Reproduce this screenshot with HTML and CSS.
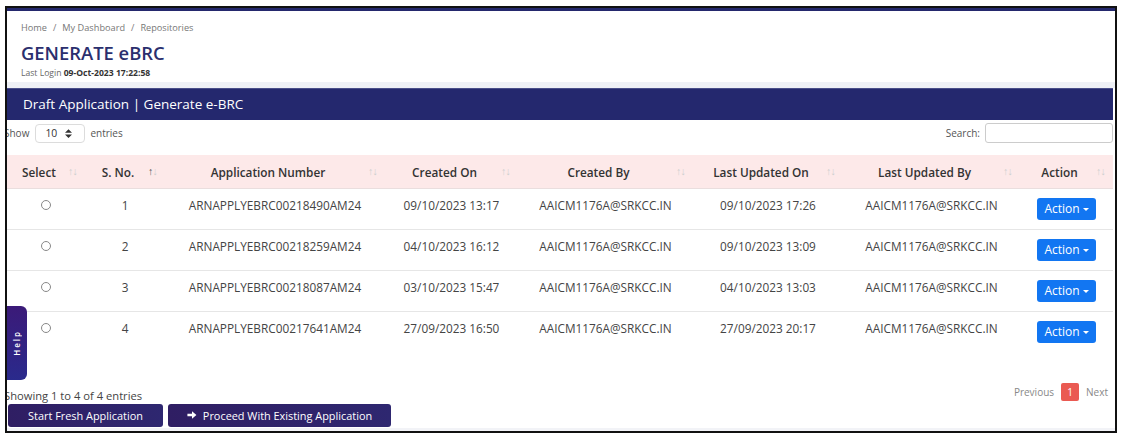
FILE: index.html
```html
<!DOCTYPE html>
<html>
<head>
<meta charset="utf-8">
<link rel="stylesheet" href="styles.css">
</head>
<body>
<div class="frame">
  <div class="topline"></div>
  <div class="header">
    <div class="crumbs">Home<span class="sep">/</span>My Dashboard<span class="sep">/</span>Repositories</div>
    <h1 class="title">GENERATE eBRC</h1>
    <div class="login">Last Login <b>09-Oct-2023 17:22:58</b></div>
  </div>
  <div class="gap"></div>
  <div class="bar">Draft Application | Generate e-BRC</div>
  <div class="controls">
    <div class="len">Show <span class="sel"><span>10</span><svg class="updown" viewBox="0 0 8 10" width="7" height="9"><path d="M4 0 L8 4 L0 4 Z M0 6 L8 6 L4 10 Z" fill="#333"/></svg></span> entries</div>
    <div class="search">Search: <span class="sinput"></span></div>
  </div>
  <table class="grid">
    <colgroup>
      <col style="width:78px"><col style="width:80px"><col style="width:220px"><col style="width:133px"><col style="width:175px"><col style="width:150px"><col style="width:177px"><col style="width:93px">
    </colgroup>
    <thead>
      <tr>
        <th>Select<span class="sort"><i>↑</i><i>↓</i></span></th>
        <th>S. No.<span class="sort up"><i>↑</i><i>↓</i></span></th>
        <th>Application Number<span class="sort"><i>↑</i><i>↓</i></span></th>
        <th>Created On<span class="sort"><i>↑</i><i>↓</i></span></th>
        <th>Created By<span class="sort"><i>↑</i><i>↓</i></span></th>
        <th>Last Updated On<span class="sort"><i>↑</i><i>↓</i></span></th>
        <th>Last Updated By<span class="sort"><i>↑</i><i>↓</i></span></th>
        <th>Action<span class="sort"><i>↑</i><i>↓</i></span></th>
      </tr>
    </thead>
    <tbody>
      <tr>
        <td><span class="radio"></span></td><td>1</td><td>ARNAPPLYEBRC00218490AM24</td><td>09/10/2023 13:17</td><td>AAICM1176A@SRKCC.IN</td><td>09/10/2023 17:26</td><td>AAICM1176A@SRKCC.IN</td><td><span class="act">Action <span class="caret"></span></span></td>
      </tr>
      <tr>
        <td><span class="radio"></span></td><td>2</td><td>ARNAPPLYEBRC00218259AM24</td><td>04/10/2023 16:12</td><td>AAICM1176A@SRKCC.IN</td><td>09/10/2023 13:09</td><td>AAICM1176A@SRKCC.IN</td><td><span class="act">Action <span class="caret"></span></span></td>
      </tr>
      <tr>
        <td><span class="radio"></span></td><td>3</td><td>ARNAPPLYEBRC00218087AM24</td><td>03/10/2023 15:47</td><td>AAICM1176A@SRKCC.IN</td><td>04/10/2023 13:03</td><td>AAICM1176A@SRKCC.IN</td><td><span class="act">Action <span class="caret"></span></span></td>
      </tr>
      <tr>
        <td><span class="radio"></span></td><td>4</td><td>ARNAPPLYEBRC00217641AM24</td><td>27/09/2023 16:50</td><td>AAICM1176A@SRKCC.IN</td><td>27/09/2023 20:17</td><td>AAICM1176A@SRKCC.IN</td><td><span class="act">Action <span class="caret"></span></span></td>
      </tr>
    </tbody>
  </table>
  <div class="foot">
    <div class="info">Showing 1 to 4 of 4 entries</div>
    <div class="pager"><span class="pl">Previous</span><span class="pnum">1</span><span class="pl">Next</span></div>
  </div>
  <div class="btns">
    <span class="btn b1">Start Fresh Application</span>
    <span class="btn b2"><svg viewBox="0 0 12 12" width="10" height="10"><path d="M0.5 4.6 H6 V1.6 L11.3 6 L6 10.4 V7.4 H0.5 Z" fill="#fff"/></svg>Proceed With Existing Application</span>
  </div>
  <div class="bottomband"></div>
  <div class="tab"><span>Help</span></div>
</div>
</body>
</html>
```
FILE: styles.css
```css
html, body { margin: 0; padding: 0; background: #fff; }
body { font-family: "Open Sans", "Liberation Sans", sans-serif; color: #444; }
.frame {
  position: relative;
  margin: 6px 0 0 5px;
  width: 1112px;
  height: 427px;
  box-sizing: border-box;
  border: 2px solid #111;
  overflow: hidden;
  display: flex;
  flex-direction: column;
  background: #fff;
}
.topline { height: 3px; background: #24286d; flex: none; }
.header { padding: 11px 0 3px 14px; flex: none; }
.crumbs { font-size: 9.2px; line-height: 12px; color: #777; }
.sep { padding: 0 6px; }
.title { margin: 7px 0 0; font-size: 18.4px; line-height: 24px; font-weight: 600; color: #2b2f6e; }
.login { margin-top: 2px; font-size: 8.6px; line-height: 12px; color: #666; }
.login b { color: #333; font-weight: 700; }
.gap { height: 6px; background: #eff1f6; flex: none; }
.bar {
  flex: none; height: 32px; margin-right: 2px; box-sizing: border-box;
  background: #24286e; color: #fff; font-size: 13.5px; line-height: 31px;
  padding-left: 16px; border-top: 1px solid #4a4f8a;
}
.controls {
  flex: none; margin: 3px 2px 0 -3px; height: 20px;
  display: flex; justify-content: space-between; align-items: center;
  font-size: 10px; color: #555;
}
.len { display: flex; align-items: center; }
.sel {
  display: inline-flex; align-items: center; justify-content: space-between;
  width: 50px; height: 19px; box-sizing: border-box; margin: 0 5px 0 6px;
  border: 1px solid #dcdcdc; border-radius: 4px; padding: 0 12px 0 9px;
  font-size: 10.4px; color: #333;
}
.search { display: flex; align-items: center; }
.sinput {
  display: inline-block; width: 128px; height: 20px; box-sizing: border-box;
  margin-left: 5px; border: 1px solid #ccc; border-radius: 3px; background: #fff;
}
.grid {
  flex: none; margin-top: 12px; width: 1106px; border-collapse: collapse; table-layout: fixed;
  font-size: 11.8px;
}
.grid th {
  position: relative; height: 33px; padding: 0 14px 0 0; background: #fde9e9;
  font-weight: 600; color: #333; text-align: center; white-space: nowrap;
  border-bottom: 1px solid #eadede;
}
.sort { position: absolute; right: 8px; top: 10px; font-size: 10.5px; line-height: 12px; color: #cfcfcf; }
.sort i { font-style: normal; display: inline-block; width: 4.5px; }
.sort.up i:first-child { color: #555; }
.grid td {
  height: 41px; box-sizing: border-box; padding: 8px 0 0; vertical-align: top;
  text-align: center; line-height: 16px; color: #444; white-space: nowrap;
}
.grid tbody tr + tr td { border-top: 1px solid #e6e6e6; }
.radio {
  display: inline-block; width: 10px; height: 10px; margin-top: 3px; box-sizing: border-box;
  border: 1px solid #888; border-radius: 50%;
}
.act {
  display: inline-flex; align-items: center; justify-content: center; gap: 3px;
  width: 59px; height: 22px; margin-top: 1px; box-sizing: border-box;
  background: #1276f2; color: #fff; border-radius: 3px; font-size: 12px;
}
.caret { width: 0; height: 0; border-left: 3px solid transparent; border-right: 3px solid transparent; border-top: 3px solid #fff; }
.foot {
  flex: none; margin: 30px 0 0 -3px; height: 20px; padding-right: 7px;
  display: flex; justify-content: space-between;
}
.info { align-self: flex-end; font-size: 11.2px; line-height: 14px; color: #444; }
.pager { display: flex; align-items: center; height: 18px; gap: 6px; font-size: 10px; color: #888; }
.pnum {
  display: inline-flex; align-items: center; justify-content: center;
  width: 18px; height: 18px; background: #ea5a52; color: #fff; border-radius: 2px; margin: 0 1px;
}
.btns { flex: none; display: flex; gap: 5px; margin: 1px 0 0 1px; }
.btn {
  display: inline-flex; align-items: center; justify-content: center; gap: 6px;
  height: 23px; border-radius: 3px; color: #fff; font-size: 10.9px;
  background: linear-gradient(90deg, #2f1e63, #2e2770);
}
.b1 { width: 155px; }
.b2 { width: 223px; }
.bottomband { flex: 1; margin-top: 1px; background: #f2f3f7; }
.tab {
  position: absolute; left: 0; top: 298px; width: 20px; height: 74px; overflow: hidden;
  border-radius: 0 6px 6px 0; background: linear-gradient(180deg, #3b1a78, #2a2a8c);
  display: flex; align-items: center; justify-content: center;
}
.tab span {
  writing-mode: vertical-rl; transform: rotate(180deg);
  color: #fff; font-size: 8px; font-weight: 600; letter-spacing: 2px; line-height: 10px;
}
```
